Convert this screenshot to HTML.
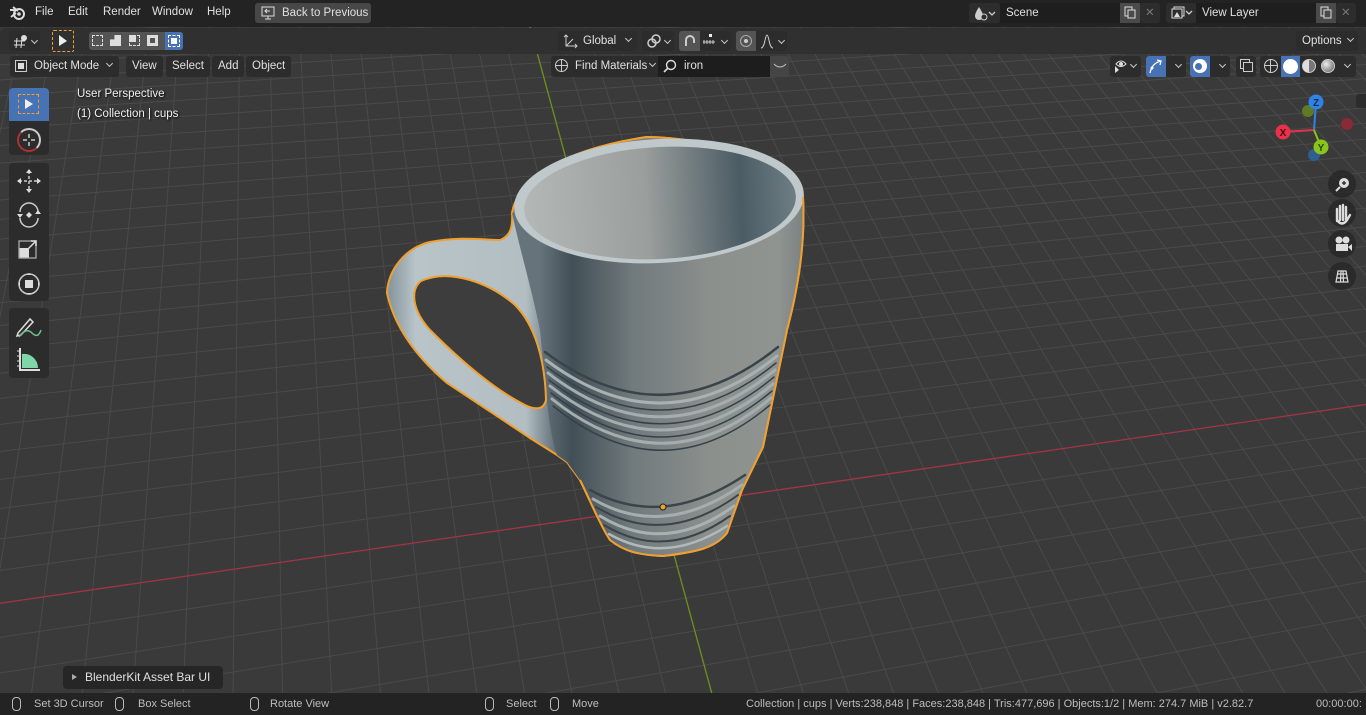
<!DOCTYPE html>
<html><head><meta charset="utf-8">
<style>
*{margin:0;padding:0;box-sizing:border-box}
html,body{width:1366px;height:715px;overflow:hidden}
body{background:#3a3a3a;font-family:"Liberation Sans","DejaVu Sans",sans-serif;font-size:11.5px;color:#e0e0e0;position:relative}
.a{position:absolute}
.top{left:0;top:0;width:1366px;height:27px;background:#232323}
.menu{top:6px}
.btn{position:absolute;background:#2c2c2c;border-radius:3px;height:21px;line-height:21px;padding:0 6px;color:#e0e0e0;white-space:nowrap;overflow:hidden}
.chev{display:inline-block;width:5px;height:5px;border-right:1.3px solid #ccc;border-bottom:1.3px solid #ccc;transform:rotate(45deg);margin:0 0 3px 4px}
.tb{position:absolute;left:9px;width:40px;background:#2c2c2c;border-radius:4px}
.nav{position:absolute;left:1328px;width:28px;height:28px;border-radius:50%;background:rgba(38,38,38,.75)}
.status{left:0;top:693px;width:1366px;height:22px;background:#232323;color:#bdbdbd;font-size:11px;overflow:hidden}
.status span{position:absolute;top:5px;white-space:nowrap}
.mouse{position:absolute;top:4px;width:9px;height:14px;border:1.3px solid #bbb;border-radius:4px}
</style></head><body>
<svg class="a" style="left:0;top:0" width="1366" height="715" id="grid"></svg>

<svg class="a" style="left:0;top:0" width="1366" height="715">
<defs>
<linearGradient id="body" x1="540" y1="0" x2="805" y2="0" gradientUnits="userSpaceOnUse">
<stop offset="0" stop-color="#66737a"/><stop offset=".12" stop-color="#414f56"/><stop offset=".35" stop-color="#717a7c"/><stop offset=".65" stop-color="#8c908d"/><stop offset=".9" stop-color="#8f9491"/><stop offset="1" stop-color="#7b8181"/></linearGradient>
<linearGradient id="inner" x1="525" y1="0" x2="795" y2="0" gradientUnits="userSpaceOnUse">
<stop offset="0" stop-color="#b3b7b5"/><stop offset=".45" stop-color="#9a9e9c"/><stop offset=".8" stop-color="#4b5c64"/><stop offset="1" stop-color="#6e7d84"/></linearGradient>
<linearGradient id="handle" x1="390" y1="0" x2="560" y2="0" gradientUnits="userSpaceOnUse">
<stop offset="0" stop-color="#8898a0"/><stop offset=".15" stop-color="#b8c4c8"/><stop offset=".8" stop-color="#b2bec2"/><stop offset="1" stop-color="#56646c"/></linearGradient>
</defs>
<path d="M512,213 C518,180 560,150 647,137 C713,138 775,160 803,197 C806,250 795,300 787,330 L763,447 L742,490 L727,533 C715,548 697,552 663,556 C640,555 625,552 610,540 C600,525 590,500 580,480 L567,462 L557,455 L530,438 C510,425 480,405 447,383 C420,360 395,330 387,293 C388,270 405,248 430,242 C460,236 485,240 500,240 C510,236 513,228 512,213 Z" fill="url(#handle)" stroke="#f0a030" stroke-width="2"/>
<path d="M512,213 C518,180 560,150 647,137 C713,138 775,160 803,197 C806,250 795,300 787,330 L763,447 L742,490 L727,533 C715,548 697,552 663,556 C640,555 625,552 610,540 C600,525 590,500 580,480 L567,462 L557,455 C548,430 545,380 540,330 C532,290 520,250 512,213 Z" fill="url(#body)"/>
<path d="M421,281 C450,268 490,283 515,305 C535,325 545,360 546,400 C544,410 535,410 525,405 C495,390 460,360 430,330 C412,310 410,290 421,281 Z" fill="#3d3d3d" stroke="#f0a030" stroke-width="2"/>
<path d="M512,213 C518,180 560,150 647,137 C713,138 775,160 803,197" fill="none" stroke="#f0a030" stroke-width="2"/>
<ellipse cx="659" cy="201" rx="145" ry="62" fill="#bfc8ca" transform="rotate(-3 659 201)"/>
<ellipse cx="660" cy="203" rx="136" ry="56" fill="url(#inner)" transform="rotate(-3 660 203)"/>
<g fill="none" stroke-linecap="round">
<path d="M545,352 Q663,440 778,347" stroke="#38444a" stroke-width="2.5"/>
<path d="M546,360 Q663,448 777,356" stroke="#a8b1b3" stroke-width="3"/>
<path d="M547,367 Q663,455 776,363" stroke="#35414a" stroke-width="1.5"/>
<path d="M548,373 Q663,462 775,370" stroke="#a4adaf" stroke-width="3"/>
<path d="M549,380 Q663,469 774,377" stroke="#35414a" stroke-width="1.5"/>
<path d="M550,386 Q663,475 773,384" stroke="#a4adaf" stroke-width="3"/>
<path d="M551,393 Q663,482 772,391" stroke="#35414a" stroke-width="1.5"/>
<path d="M552,399 Q663,488 771,398" stroke="#a4adaf" stroke-width="3"/>
<path d="M553,406 Q663,495 770,405" stroke="#35414a" stroke-width="1.5"/>
<path d="M590,490 Q663,530 745,475" stroke="#3a4449" stroke-width="2.5"/>
<path d="M593,499 Q663,540 742,485" stroke="#a4adaf" stroke-width="3"/>
<path d="M596,507 Q665,548 738,495" stroke="#3a4449" stroke-width="2"/>
<path d="M600,516 Q665,556 734,506" stroke="#a8b1b3" stroke-width="3"/>
<path d="M604,525 Q665,562 730,516" stroke="#3a4449" stroke-width="2"/>
<path d="M609,534 Q665,566 727,526" stroke="#b0b9bb" stroke-width="2.5"/>
</g>
<path d="M803,197 C806,250 795,300 787,330 L763,447 L742,490 L727,533 C715,548 697,552 663,556 C640,555 625,552 610,540 C600,525 590,500 580,480" fill="none" stroke="#f0a030" stroke-width="2"/>
<circle cx="663" cy="507" r="3" fill="#f0a030" stroke="#222" stroke-width="1"/>
</svg>

<div class="a top"></div>
<svg class="a" style="left:9px;top:5px" width="17" height="16" viewBox="0 0 17 16"><circle cx="10" cy="9" r="5" fill="none" stroke="#ddd" stroke-width="2"/><circle cx="10" cy="9" r="1.8" fill="#ddd"/><path d="M1,5 L8,5 M4,2 L9,6 M2,12 L7,8" stroke="#ddd" stroke-width="2"/></svg>
<div class="a menu" style="left:35px">File</div>
<div class="a menu" style="left:68px">Edit</div>
<div class="a menu" style="left:103px">Render</div>
<div class="a menu" style="left:152px">Window</div>
<div class="a menu" style="left:207px">Help</div>
<div class="btn" style="left:255px;top:3px;width:116px;height:20px;line-height:20px;background:#474747;padding-left:27px">Back to Previous</div>
<svg class="a" style="left:261px;top:6px" width="14" height="14"><rect x="1" y="1" width="12" height="9" fill="none" stroke="#ddd"/><path d="M4,13 L10,13 M7,10 L7,13 M9,5 L4,5 M6,3 L4,5 L6,7" stroke="#ddd" fill="none"/></svg>

<div class="btn" style="left:969px;top:3px;width:31px;height:20px;background:#2d2d2d"></div>
<svg class="a" style="left:973px;top:5px" width="24" height="16"><path d="M6,2 Q2,8 2,11 A4,4 0 0 0 10,11 Q10,8 6,2Z" fill="#ccc"/><circle cx="11" cy="12" r="3" fill="#2d2d2d" stroke="#ccc"/><path d="M16,7 L19,10 L22,7" stroke="#ccc" fill="none" stroke-width="1.3"/></svg>
<div class="btn" style="left:1000px;top:3px;width:120px;height:20px;background:#1e1e1e;border-radius:0;line-height:20px">Scene</div>
<div class="btn" style="left:1120px;top:3px;width:20px;height:20px;background:#4a4a4a;border-radius:0"></div>
<svg class="a" style="left:1124px;top:6px" width="13" height="13"><rect x="1" y="1" width="7" height="9" fill="none" stroke="#ddd"/><rect x="4" y="4" width="7" height="8" fill="#4a4a4a" stroke="#ddd"/></svg>
<div class="btn" style="left:1140px;top:3px;width:20px;height:20px;background:#2d2d2d;color:#777;padding:0 5px;line-height:20px">✕</div>
<div class="btn" style="left:1166px;top:3px;width:31px;height:20px;background:#2d2d2d"></div>
<svg class="a" style="left:1171px;top:6px" width="24" height="14"><rect x="3" y="1" width="10" height="9" fill="none" stroke="#ddd"/><rect x="1" y="3" width="10" height="9" fill="#2d2d2d" stroke="#ddd"/><path d="M3,11 L6,6 L9,11Z" fill="#ddd"/><path d="M15,5 L18,8 L21,5" stroke="#ccc" fill="none" stroke-width="1.3"/></svg>
<div class="btn" style="left:1196px;top:3px;width:120px;height:20px;background:#1e1e1e;border-radius:0;line-height:20px">View Layer</div>
<div class="btn" style="left:1316px;top:3px;width:20px;height:20px;background:#4a4a4a;border-radius:0"></div>
<svg class="a" style="left:1320px;top:6px" width="13" height="13"><rect x="1" y="1" width="7" height="9" fill="none" stroke="#ddd"/><rect x="4" y="4" width="7" height="8" fill="#4a4a4a" stroke="#ddd"/></svg>
<div class="btn" style="left:1336px;top:3px;width:20px;height:20px;background:#2d2d2d;color:#777;padding:0 5px;line-height:20px">✕</div>

<div class="a" style="left:0;top:28px;width:1366px;height:26px;background:#303030;border-radius:5px 5px 0 0"></div>
<div class="btn" style="left:9px;top:31px;width:31px;height:20px"></div>
<svg class="a" style="left:12px;top:33px" width="18" height="16"><path d="M2,8 L13,8 M2,12 L13,12 M5,5 L4,15 M10,5 L9,15" stroke="#ddd"/><circle cx="12" cy="5" r="3" fill="#ddd"/></svg><span class="a chev" style="left:28px;top:38px"></span>
<div class="a" style="left:52px;top:30px;width:22px;height:22px;border:1.5px dashed #f0a030;border-radius:2px"></div>
<svg class="a" style="left:58px;top:34px" width="10" height="14"><path d="M1,1 L1,12 L9,7Z" fill="#eee"/></svg>
<div class="a" style="left:89px;top:32px;width:94px;height:18px;background:#545454;border-radius:3px"></div>
<div class="a" style="left:165px;top:32px;width:18px;height:18px;background:#4772b3;border-radius:0 3px 3px 0"></div>
<div class="a" style="left:92px;top:35px;width:11px;height:11px;border:1px dashed #ddd"></div>
<div class="a" style="left:110px;top:35px;width:11px;height:11px;background:#ddd;clip-path:polygon(0 40%,40% 40%,40% 0,100% 0,100% 100%,0 100%)"></div>
<div class="a" style="left:129px;top:35px;width:11px;height:11px;border:1px dashed #ddd"></div><div class="a" style="left:129px;top:35px;width:7px;height:7px;background:#ddd"></div>
<div class="a" style="left:147px;top:35px;width:11px;height:11px;background:#ddd"></div><div class="a" style="left:150px;top:38px;width:5px;height:5px;background:#545454"></div>
<div class="a" style="left:168px;top:35px;width:12px;height:12px;border:1px dashed #fff"></div><div class="a" style="left:171px;top:38px;width:6px;height:6px;background:#fff"></div>

<div class="btn" style="left:558px;top:31px;width:79px;height:20px;line-height:20px;padding-left:25px">Global<span class="chev" style="margin-left:10px"></span></div>
<svg class="a" style="left:563px;top:33px" width="16" height="16"><path d="M3,2 L3,13 L14,13 M1,4 L3,2 L5,4 M12,11 L14,13 L12,15 M3,13 L10,6" stroke="#ccc" fill="none"/></svg>
<div class="btn" style="left:642px;top:31px;width:32px;height:20px"></div>
<svg class="a" style="left:646px;top:34px" width="16" height="15"><circle cx="6" cy="9" r="4" fill="none" stroke="#ccc" stroke-width="1.5"/><circle cx="10" cy="5" r="4" fill="none" stroke="#ccc" stroke-width="1.5"/></svg><span class="a chev" style="left:661px;top:38px"></span>
<div class="btn" style="left:679px;top:31px;width:21px;height:20px;background:#545454;border-radius:3px 0 0 3px"></div>
<svg class="a" style="left:682px;top:33px" width="15" height="16"><path d="M4,13 L4,7 A4,4 0 0 1 12,7 L12,10" stroke="#ccc" stroke-width="2" fill="none"/></svg>
<div class="btn" style="left:700px;top:31px;width:31px;height:20px;border-radius:0 3px 3px 0"></div>
<svg class="a" style="left:702px;top:33px" width="15" height="14"><path d="M1,9 L13,9 M2,7 L2,11 M5,7 L5,11 M8,7 L8,11 M11,7 L11,11" stroke="#ccc"/><rect x="7" y="1" width="3" height="3" fill="#eee"/></svg><span class="a chev" style="left:718px;top:38px"></span>
<div class="btn" style="left:736px;top:31px;width:51px;height:20px"></div>
<div class="a" style="left:736px;top:31px;width:20px;height:20px;background:#545454;border-radius:3px 0 0 3px"></div>
<div class="a" style="left:740px;top:35px;width:12px;height:12px;border:1px solid #aaa;border-radius:50%"></div><div class="a" style="left:744px;top:39px;width:4px;height:4px;background:#ccc;border-radius:50%"></div>
<svg class="a" style="left:760px;top:33px" width="14" height="16"><path d="M1,15 C5,15 5,2 7,2 C9,2 9,15 13,15" stroke="#ccc" fill="none"/></svg><span class="a chev" style="left:775px;top:38px"></span>
<div class="btn" style="left:1296px;top:31px;width:62px;height:20px;line-height:20px">Options<span class="chev" style="margin-left:6px"></span></div>

<div class="btn" style="left:10px;top:56px;width:109px;padding-left:24px">Object Mode<span class="chev" style="margin-left:8px"></span></div>
<div class="a" style="left:15px;top:60px;width:12px;height:12px;border:1px solid #ccc"></div><div class="a" style="left:18px;top:63px;width:6px;height:6px;background:#ddd"></div>
<div class="btn" style="left:126px;top:56px">View</div>
<div class="btn" style="left:166px;top:56px">Select</div>
<div class="btn" style="left:212px;top:56px">Add</div>
<div class="btn" style="left:246px;top:56px">Object</div>
<div class="btn" style="left:551px;top:56px;width:107px;padding-left:24px;border-radius:3px 0 0 3px">Find Materials<span class="chev" style="margin-left:3px"></span></div>
<div class="a" style="left:555px;top:59px;width:13px;height:13px;border:1px solid #ccc;border-radius:50%"></div><div class="a" style="left:561px;top:59px;width:1px;height:13px;background:#ccc"></div><div class="a" style="left:555px;top:65px;width:13px;height:1px;background:#ccc"></div>
<div class="btn" style="left:658px;top:56px;width:112px;background:#1d1d1d;border-radius:0;padding-left:26px">iron</div>
<svg class="a" style="left:663px;top:59px" width="14" height="14"><circle cx="8" cy="6" r="4.5" fill="none" stroke="#ddd" stroke-width="1.4"/><path d="M5,9 L1,13" stroke="#ddd" stroke-width="1.6"/></svg>
<div class="btn" style="left:770px;top:56px;width:19px;background:#454545;border-radius:0 3px 3px 0"></div>
<svg class="a" style="left:773px;top:62px" width="14" height="8"><path d="M1,2 Q7,8 13,2" stroke="#bbb" fill="none"/></svg>

<div class="btn" style="left:1110px;top:56px;width:31px"></div>
<svg class="a" style="left:1113px;top:58px" width="16" height="16"><path d="M3,6 Q8,0 13,6 Q8,11 3,6Z" fill="none" stroke="#ddd"/><circle cx="8" cy="6" r="2" fill="#ddd"/><path d="M2,8 L2,15 L6,12Z" fill="#ddd"/></svg><span class="a chev" style="left:1127px;top:62px"></span>
<div class="btn" style="left:1146px;top:56px;width:40px"></div>
<div class="a" style="left:1146px;top:56px;width:20px;height:21px;background:#4772b3;border-radius:3px 0 0 3px"></div>
<svg class="a" style="left:1148px;top:58px" width="16" height="17"><path d="M2,15 Q4,5 13,3 M9,2 L13,3 L12,7" stroke="#fff" fill="none" stroke-width="1.3"/><circle cx="4" cy="10" r="1.5" fill="#fff"/></svg><span class="a chev" style="left:1172px;top:62px"></span>
<div class="btn" style="left:1190px;top:56px;width:40px"></div>
<div class="a" style="left:1190px;top:56px;width:20px;height:21px;background:#4772b3;border-radius:3px 0 0 3px"></div>
<div class="a" style="left:1193px;top:59px;width:14px;height:14px;border-radius:50%;background:#fff"></div><div class="a" style="left:1195px;top:63px;width:7px;height:7px;border-radius:50%;background:#4772b3"></div><span class="a chev" style="left:1216px;top:62px"></span>
<div class="btn" style="left:1236px;top:56px;width:20px"></div>
<div class="a" style="left:1240px;top:59px;width:10px;height:10px;border:1px solid #ccc"></div><div class="a" style="left:1243px;top:62px;width:10px;height:10px;border:1px solid #ccc;background:#2c2c2c"></div>
<div class="btn" style="left:1260px;top:56px;width:96px"></div>
<div class="a" style="left:1281px;top:56px;width:19px;height:21px;background:#4772b3"></div>
<div class="a" style="left:1264px;top:59px;width:14px;height:14px;border:1px solid #ccc;border-radius:50%"></div><div class="a" style="left:1270px;top:59px;width:1px;height:14px;background:#ccc"></div><div class="a" style="left:1264px;top:65px;width:14px;height:1px;background:#ccc"></div>
<div class="a" style="left:1283px;top:59px;width:15px;height:15px;border-radius:50%;background:#fff"></div>
<div class="a" style="left:1302px;top:59px;width:14px;height:14px;border-radius:50%;background:linear-gradient(90deg,#ddd 50%,#777 50%);border:1px solid #ccc"></div>
<div class="a" style="left:1321px;top:59px;width:14px;height:14px;border-radius:50%;background:radial-gradient(circle at 35% 35%,#eee,#555);border:1px solid #ccc"></div>
<span class="a chev" style="left:1341px;top:62px"></span>

<div class="a" style="left:77px;top:88px;color:#f0f0f0;font-size:11.5px;text-shadow:1px 1px 2px #000">User Perspective</div>
<div class="a" style="left:77px;top:108px;color:#f0f0f0;font-size:11.5px;text-shadow:1px 1px 2px #000">(1) Collection | cups</div>

<div class="tb" style="top:88px;height:67px"></div>
<div class="a" style="left:9px;top:88px;width:40px;height:33px;background:#4772b3;border-radius:4px 4px 0 0"></div>
<div class="a" style="left:18px;top:94px;width:21px;height:20px;border:1.5px dashed #f0a030"></div>
<svg class="a" style="left:24px;top:98px" width="10" height="12"><path d="M1,1 L1,11 L9,6Z" fill="#eee"/></svg>
<div class="a" style="left:17px;top:128px;width:24px;height:24px;border-radius:50%;border:2px solid #ccc;border-left-color:#a33;border-bottom-color:#a33"></div>
<svg class="a" style="left:17px;top:128px" width="24" height="24"><path d="M12,6 L12,10 M12,14 L12,18 M6,12 L10,12 M14,12 L18,12" stroke="#ccc" stroke-width="1.5"/></svg>
<div class="tb" style="top:163px;height:138px"></div>
<svg class="a" style="left:15px;top:168px" width="28" height="26"><path d="M14,3 L14,23 M4,13 L24,13" stroke="#ccc" stroke-width="1.5" stroke-dasharray="3 2"/><path d="M11,5 L14,1 L17,5Z M11,21 L14,25 L17,21Z M6,10 L2,13 L6,16Z M22,10 L26,13 L22,16Z" fill="#ddd"/></svg>
<svg class="a" style="left:15px;top:202px" width="28" height="26"><path d="M5,10 A9,9 0 0 1 23,10 M23,16 A9,9 0 0 1 5,16" stroke="#ccc" fill="none" stroke-width="1.5"/><path d="M11,13 L14,10 L17,13 L14,16Z" fill="#ddd"/><path d="M2,12 L8,12 L5,16Z M20,12 L26,12 L23,8Z" fill="#ddd"/></svg>
<svg class="a" style="left:17px;top:238px" width="24" height="24"><rect x="2" y="10" width="10" height="10" fill="#ddd"/><rect x="2" y="3" width="17" height="17" fill="none" stroke="#aaa" stroke-width="1.3"/><path d="M11,11 L19,3 M14,3 L19,3 L19,8" stroke="#ddd" stroke-width="1.5" fill="none"/></svg>
<svg class="a" style="left:15px;top:270px" width="28" height="28"><circle cx="14" cy="14" r="10" fill="none" stroke="#ccc" stroke-width="1.5"/><rect x="10" y="10" width="8" height="8" fill="#ddd"/><path d="M12,5 L14,3 L16,5Z M12,23 L14,25 L16,23Z M5,12 L3,14 L5,16Z M23,12 L25,14 L23,16Z" fill="#ddd"/></svg>
<div class="tb" style="top:308px;height:70px"></div>
<svg class="a" style="left:14px;top:313px" width="30" height="26"><path d="M4,20 L16,6 L19,9 L7,22 L3,23Z" fill="none" stroke="#ddd" stroke-width="1.5"/><path d="M5,24 Q12,14 18,20 T27,17" stroke="#6fbf8f" fill="none" stroke-width="1.5"/></svg>
<svg class="a" style="left:16px;top:346px" width="26" height="28"><path d="M4,2 L4,24 L24,24" stroke="#ddd" stroke-width="2" fill="none"/><path d="M6,8 A14,14 0 0 1 22,22 L6,22Z" fill="#7fd6a8"/><path d="M1,5 L4,5 M1,10 L4,10 M1,15 L4,15 M1,20 L4,20" stroke="#ddd"/></svg>

<svg class="a" style="left:1270px;top:88px" width="90" height="80">
<circle cx="38" cy="23" r="6" fill="#5f7a26"/><circle cx="77" cy="36" r="6" fill="#8b2a37"/><circle cx="44" cy="67" r="6" fill="#2d5f8f"/>
<path d="M44,42 L46,14" stroke="#2f83e4" stroke-width="2"/><path d="M44,42 L13,44" stroke="#e6334a" stroke-width="2"/><path d="M44,42 L51,59" stroke="#8bc41a" stroke-width="2"/>
<circle cx="46" cy="14" r="7.5" fill="#2f83e4"/><circle cx="13" cy="44" r="7.5" fill="#e6334a"/><circle cx="51" cy="59" r="7.5" fill="#8bc41a"/>
<text x="46" y="18" font-size="10" font-weight="bold" text-anchor="middle" fill="#0c2a4f" font-family="Liberation Sans">Z</text>
<text x="13" y="48" font-size="10" font-weight="bold" text-anchor="middle" fill="#4a0c14" font-family="Liberation Sans">X</text>
<text x="51" y="63" font-size="10" font-weight="bold" text-anchor="middle" fill="#2c4506" font-family="Liberation Sans">Y</text>
</svg>
<div class="a" style="left:1356px;top:94px;width:10px;height:14px;background:#2c2c2c;border-radius:3px 0 0 3px"></div>
<div class="nav" style="top:170px"></div><div class="nav" style="top:199px"></div><div class="nav" style="top:230px"></div><div class="nav" style="top:262px"></div>
<svg class="a" style="left:1328px;top:170px" width="28" height="120">
<circle cx="16" cy="13" r="5" fill="#ddd"/><path d="M14,13 L18,13 M16,11 L16,15" stroke="#333" stroke-width="1.5"/><path d="M12,17 L8,21" stroke="#ddd" stroke-width="2"/>
<path d="M9,51 L9,39 M12,50 L12,36 M15,50 L15,35 M18,50 L18,37 M9,50 Q14,57 19,50 L22,45" stroke="#ddd" stroke-width="2.4" fill="none" stroke-linecap="round"/>
<circle cx="11" cy="70" r="3.5" fill="#ddd"/><circle cx="18" cy="70" r="3.5" fill="#ddd"/><rect x="8" y="74" width="12" height="7" fill="#ddd"/><path d="M20,77 L24,74 L24,81Z" fill="#ddd"/>
<path d="M8,112 L20,112 L18,101 L10,101Z M9,108 L19,108 M9.5,104 L18.5,104 M13,101 L12.5,112 M15,101 L15.5,112" stroke="#ddd" fill="none" stroke-width="1.2"/>
</svg>

<div class="a" style="left:63px;top:666px;width:160px;height:23px;background:#262626;border-radius:4px;color:#e0e0e0;font-size:12px;line-height:23px;padding-left:22px;white-space:nowrap">BlenderKit Asset Bar UI</div>
<svg class="a" style="left:71px;top:673px" width="7" height="8"><path d="M1,1 L6,4 L1,7Z" fill="#aaa"/></svg>

<div class="a status">
<div class="mouse" style="left:12px"></div><span style="left:34px">Set 3D Cursor</span>
<div class="mouse" style="left:115px"></div><span style="left:138px">Box Select</span>
<div class="mouse" style="left:250px"></div><span style="left:270px">Rotate View</span>
<div class="mouse" style="left:485px"></div><span style="left:506px">Select</span>
<div class="mouse" style="left:550px"></div><span style="left:572px">Move</span>
<span style="left:746px">Collection | cups | Verts:238,848 | Faces:238,848 | Tris:477,696 | Objects:1/2 | Mem: 274.7 MiB | v2.82.7</span>
<span style="left:1316px">00:00:00:</span>
</div>

<script>
(function(){
var s=document.getElementById('grid');
var O=[661,507],A=[6000,-270],B=[250,-1000],a=0.0074,b=0.019;
function P(u,v){var w=1+a*u+b*v;return [(O[0]+a*u*A[0]+b*v*B[0])/w,(O[1]+a*u*A[1]+b*v*B[1])/w,w];}
var out='';
function line(f,col,wd){var pts=[];for(var t=-400;t<=3000;t+=0.5){var p=f(t);if(p[2]>0.03&&p[0]>-3000&&p[0]<5000&&p[1]>-3000&&p[1]<3000)pts.push(p);}
if(pts.length<2)return;var p1=pts[0],p2=pts[pts.length-1];out+='<line x1="'+p1[0].toFixed(1)+'" y1="'+p1[1].toFixed(1)+'" x2="'+p2[0].toFixed(1)+'" y2="'+p2[1].toFixed(1)+'" stroke="'+col+'" stroke-width="'+wd+'"/>';}
for(var u=-130;u<=200;u++){if(u==0)continue;(function(u){line(function(t){return P(u,t)},'#4a4a4a',1)})(u);}
for(var v=-50;v<=300;v++){if(v==0)continue;(function(v){line(function(t){return P(t,v)},'#4a4a4a',1)})(v);}
line(function(t){return P(0,t)},'#6f8f1f',1.3);
line(function(t){return P(t,0)},'#a33447',1.3);
s.innerHTML=out;
})();
</script>
</body></html>
